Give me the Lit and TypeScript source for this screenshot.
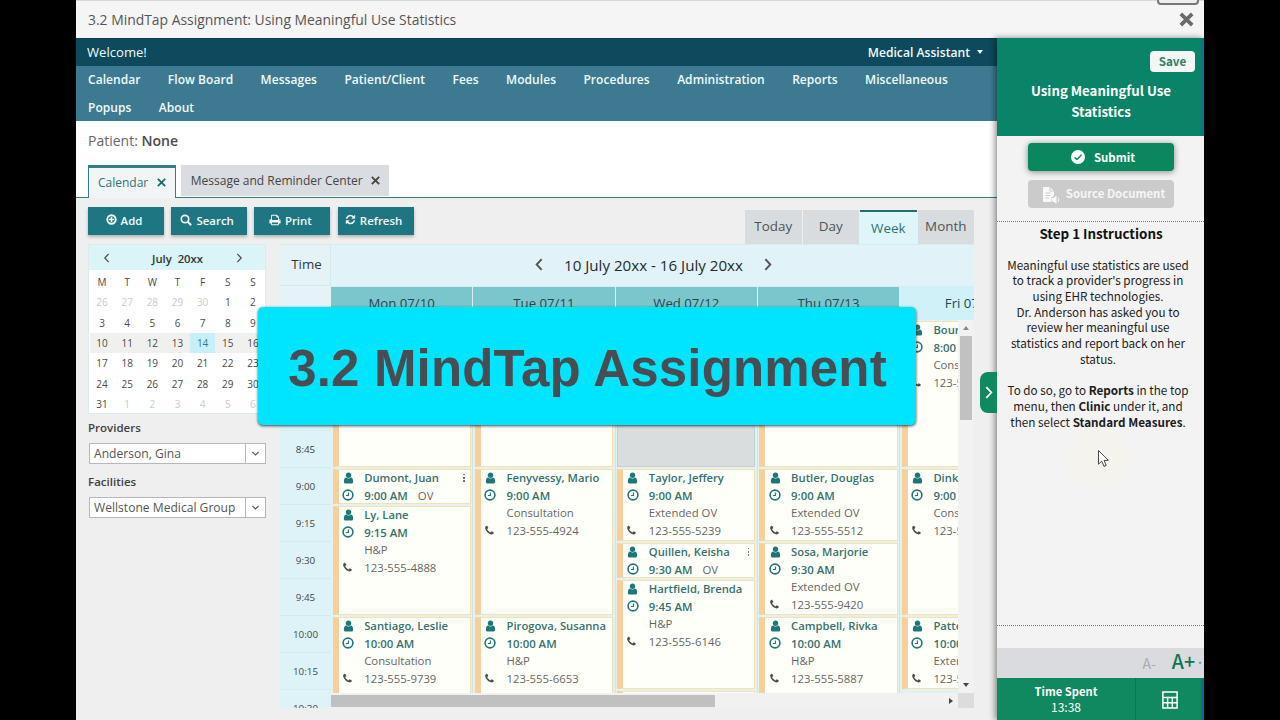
import { LitElement, html, css, svg, nothing } from "lit";
import { customElement, property } from "lit/decorators.js";
import { classMap } from "lit/directives/class-map.js";

const PATHS = {
  user: "M1536 1399q0 109-62.5 187t-150.5 78h-854q-88 0-150.5-78t-62.5-187q0-85 8.5-160.5t31.5-152 58.5-131 94-89 134.5-34.5q131 128 313 128t313-128q76 0 134.5 34.5t94 89 58.5 131 31.5 152 8.5 160.5zm-256-887q0 159-112.5 271.5t-271.5 112.5-271.5-112.5-112.5-271.5 112.5-271.5 271.5-112.5 271.5 112.5 112.5 271.5z",
  phone: "M1600 1240q0 27-10 70.5t-21 68.5q-21 50-122 106-94 51-186 51-27 0-52.5-3.5t-57.5-12.5-47.5-14.5-55.5-20.5-49-18q-98-35-175-83-128-79-264.5-215.5t-215.5-264.5q-48-77-83-175-3-9-18-49t-20.5-55.5-14.5-47.5-12.5-57.5-3.5-52.5q0-92 51-186 56-101 106-122 25-11 68.5-21t70.5-10q14 0 21 3 18 6 53 76 11 19 30 54t35 63.5 31 53.5q3 4 17.5 25t21.5 35.5 7 28.5q0 20-28.5 50t-62 55-62 53-28.5 46q0 9 5 22.5t8.5 20.5 14 24 11.5 19q76 137 174 235t235 174q2 1 19 11.5t24 14 20.5 8.5 22.5 5q18 0 46-28.5t53-62 55-62 50-28.5q14 0 28.5 7t35.5 21.5 25 17.5q25 15 53.5 31t63.5 35 54 30q70 35 76 53 3 7 3 21z",
  refresh: "M1639 1056q0 5-1 7-64 268-268 434.5t-478 166.5q-146 0-282.5-55t-243.5-157l-129 129q-19 19-45 19t-45-19-19-45v-448q0-26 19-45t45-19h448q26 0 45 19t19 45-19 45l-137 137q71 66 161 102t187 36q134 0 250-65t186-179q11-17 53-117 8-23 30-23h192q13 0 22.5 9.5t9.5 22.5zm25-800v448q0 26-19 45t-45 19h-448q-26 0-45-19t-19-45 19-45l138-138q-148-137-349-137-134 0-250 65t-186 179q-11 17-53 117-8 23-30 23h-199q-13 0-22.5-9.5t-9.5-22.5v-7q65-268 270-434.5t480-166.5q146 0 284 55.5t245 156.5l130-129q19-19 45-19t45 19 19 45z",
  print: "M448 1536h896v-256h-896v256zm0-640h896v-384h-160q-40 0-68-28t-28-68v-160h-640v640zm1152 64q0-26-19-45t-45-19-45 19-19 45 19 45 45 19 45-19 19-45zm128 0v416q0 13-9.5 22.5t-22.5 9.5h-224v160q0 40-28 68t-68 28h-960q-40 0-68-28t-28-68v-160h-224q-13 0-22.5-9.5t-9.5-22.5v-416q0-79 56.5-135.5t135.5-56.5h64v-544q0-40 28-68t68-28h672q40 0 88 20t76 48l152 152q28 28 48 76t20 88v256h64q79 0 135.5 56.5t56.5 135.5z",
};
const fa = (name: keyof typeof PATHS, size: number) =>
  html`<svg width=${size} height=${size} viewBox="0 0 1792 1792" fill="currentColor"><path d=${PATHS[name]} /></svg>`;

const stroked = (size: number, width: number, body: unknown) =>
  html`<svg width=${size} height=${size} viewBox="0 0 12 12" fill="none" stroke="currentColor" stroke-width=${width}>${body}</svg>`;

const clock = () => stroked(12, 1.6, svg`<circle cx="6" cy="6" r="4.9" /><path d="M6.4 3.4V6.5H3.9" stroke-width="1.1" />`);
const plus = () => stroked(11, 2.1, svg`<circle cx="6" cy="6" r="4.6" /><path d="M6 3.2V8.8M3.2 6H8.8" stroke-width="1.7" />`);
const search = () => stroked(12, 1.7, svg`<circle cx="5" cy="5" r="3.7" /><path d="M7.7 7.7L11.2 11.2" stroke-width="2" />`);
const cross = (size: number, width: number) => stroked(size, width, svg`<path d="M2 2L10 10M10 2L2 10" />`);
const left = (size: number, width: number) => stroked(size, width, svg`<path d="M8 1L3.4 6L8 11" />`);
const right = (size: number, width: number) => stroked(size, width, svg`<path d="M4 1L8.6 6L4 11" />`);
const down = () => stroked(9, 1.6, svg`<path d="M1.8 3.8L6 8L10.2 3.8" />`);

interface Visit {
  slots: number;
  name?: string;
  time?: string;
  kind?: string;
  phone?: string;
  closed?: boolean;
}
interface Day {
  label: string;
  current?: boolean;
  visits: Visit[];
}

const OPEN: Visit = { slots: 4 };
const DAYS: Day[] = [
  { label: "Mon 07/10", visits: [OPEN,
    { slots: 1, name: "Dumont, Juan", time: "9:00 AM", kind: "OV" },
    { slots: 3, name: "Ly, Lane", time: "9:15 AM", kind: "H&P", phone: "123-555-4888" },
    { slots: 3, name: "Santiago, Leslie", time: "10:00 AM", kind: "Consultation", phone: "123-555-9739" }] },
  { label: "Tue 07/11", visits: [OPEN,
    { slots: 4, name: "Fenyvessy, Mario", time: "9:00 AM", kind: "Consultation", phone: "123-555-4924" },
    { slots: 3, name: "Pirogova, Susanna", time: "10:00 AM", kind: "H&P", phone: "123-555-6653" }] },
  { label: "Wed 07/12", visits: [{ slots: 4, closed: true },
    { slots: 2, name: "Taylor, Jeffery", time: "9:00 AM", kind: "Extended OV", phone: "123-555-5239" },
    { slots: 1, name: "Quillen, Keisha", time: "9:30 AM", kind: "OV" },
    { slots: 3, name: "Hartfield, Brenda", time: "9:45 AM", kind: "H&P", phone: "123-555-6146" },
    { slots: 2 }] },
  { label: "Thu 07/13", visits: [OPEN,
    { slots: 2, name: "Butler, Douglas", time: "9:00 AM", kind: "Extended OV", phone: "123-555-5512" },
    { slots: 2, name: "Sosa, Marjorie", time: "9:30 AM", kind: "Extended OV", phone: "123-555-9420" },
    { slots: 3, name: "Campbell, Rivka", time: "10:00 AM", kind: "H&P", phone: "123-555-5887" }] },
  { label: "Fri 07/14", current: true, visits: [
    { slots: 4, name: "Bourne", time: "8:00 AM", kind: "Consultation", phone: "123-555" },
    { slots: 4, name: "Dinkins", time: "9:00 AM", kind: "Consultation", phone: "123-555" },
    { slots: 2, name: "Patterson", time: "10:00 AM", kind: "Extended OV", phone: "123-555" }] },
];
// The first slots sit behind the banner and carry no label.
const TIMES = ["", "", "", "8:45", "9:00", "9:15", "9:30", "9:45", "10:00", "10:15", "10:30"];

@customElement("visit-card")
class VisitCard extends LitElement {
  @property({ attribute: false }) visit!: Visit;
  static styles = css`
    :host { display: block; flex: none; box-sizing: border-box; padding: 1px 1.5px 1.5px 1.5px;
      border-right: 1px solid #cfe6df; font: 400 11.35px/17.5px "Open Sans", sans-serif; color: #666; }
    .card { box-sizing: border-box; height: 100%; background: #fffffa; border: 1px solid #f8dfb4; border-left: 6px solid #f6cf9c;
      padding-left: 3.2px; overflow: hidden; }
    .closed { background: #dadddd; border: 1px solid #c5d0d6; }
    .lines { margin-top: -1px; }
    .line { display: grid; grid-template-columns: 22.5px auto 1fr; align-items: center; height: 17.5px; white-space: nowrap; }
    .icon { display: flex; width: 13px; justify-content: center; color: #1f7679; }
    .icon.tel { color: #4c4c4c; width: 11px; }
    .name, .time { font-weight: 600; color: #35716f; font-size: 11.25px; }
    .time { font-weight: 600; font-size: 11.4px; }
    .extra { padding-left: 10px; }
    .dots { justify-self: end; display: grid; gap: 1.7px; padding-right: 5px; }
    .dots i { width: 1.7px; height: 1.7px; background: #777; }
  `;
  render() {
    const v = this.visit;
    if (!v.name) return html`<div class=${classMap({ card: true, closed: !!v.closed })}></div>`;
    const short = !v.phone;
    return html`<div class="card"><div class="lines">
      <div class="line"><span class="icon">${fa("user", 14)}</span><span class="name">${v.name}</span>
        ${short ? html`<span class="dots"><i></i><i></i><i></i></span>` : nothing}</div>
      <div class="line"><span class="icon">${clock()}</span><span class="time">${v.time}</span>
        ${short ? html`<span class="extra">${v.kind}</span>` : nothing}</div>
      ${short ? nothing : html`
        <div class="line"><span></span><span>${v.kind}</span></div>
        <div class="line"><span class="icon tel">${fa("phone", 13)}</span><span>${v.phone}</span></div>`}
    </div></div>`;
  }
}

@customElement("week-schedule")
class WeekSchedule extends LitElement {
  static styles = css`
    :host { display: grid; grid-template-columns: 51px 643px; grid-template-rows: 42px 34px 388px;
      font-family: "Open Sans", sans-serif; color: #2d3a40; }
    .time-head { display: flex; align-items: center; justify-content: center; font-size: 13.3px; background: #e6f3f6;
      border: 1px solid #d5eaec; border-width: 1px 1px 1px 0; box-sizing: border-box; padding-left: 3px; padding-bottom: 2px; }
    .range { display: flex; align-items: center; padding-left: 202px; gap: 18px; font-size: 15.15px; color: #1f2a30;
      background: #e1f3f8; border-top: 1px solid #d6ecf0; box-sizing: border-box; white-space: nowrap; padding-bottom: 1px; }
    .range svg { color: #555; margin-top: -1px; }
    .blank { background: #e6f3f6; }
    .heads { display: flex; overflow: hidden; padding-top: 1px; background: #d5eef4; }
    .heads div { flex: 0 0 142.3px; box-sizing: border-box; border-right: 1px solid #d7f0f3; background: #7bc5cd;
      font-size: 13.2px; line-height: 32px; text-align: center; color: #1c4a54; }
    .heads .current { background: #cff1f7; color: #1e4852; padding-left: 2px; }
    .times { height: 388px; overflow: hidden; background: #def3f8; }
    .times div { height: 37px; box-sizing: border-box; border-bottom: 1px solid #d2ebee; text-align: center;
      font-size: 9.8px; line-height: 38.5px; color: #3f4548; }
    .port { display: grid; grid-template-columns: 627px 16px; grid-template-rows: 373px 15px; }
    .days { display: flex; overflow: hidden; background: #e2f2ee; }
    .day { flex: 0 0 142.3px; display: flex; flex-direction: column; }
    .vbar { display: flex; flex-direction: column; align-items: center; justify-content: space-between; background: #f2f2f2;
      padding: 6px 0 6px; box-sizing: border-box; }
    .vthumb { width: 12px; height: 84px; background: #c1c1c1; margin-top: 6px; }
    .vbar .group { display: flex; flex-direction: column; align-items: center; }
    .up, .dn { border: 3.5px solid transparent; width: 0; }
    .up { border-top: 0; border-bottom: 4px solid #888; }
    .dn { border-bottom: 0; border-top: 4px solid #444; }
    .hbar { display: flex; align-items: center; justify-content: space-between; background: #f1f1f1; padding-right: 5px; }
    .hthumb { width: 384px; height: 12px; background: #c0c0c0; }
    .rt { border: 3.5px solid transparent; border-right: 0; border-left: 4px solid #444; }
    .corner { background: #dcdcdc; }
  `;
  render() {
    return html`
      <div class="time-head">Time</div>
      <div class="range">${left(13, 1.8)}<span>10 July 20xx - 16 July 20xx</span>${right(13, 1.8)}</div>
      <div class="blank"></div>
      <div class="heads">${DAYS.map((d) => html`<div class=${classMap({ current: !!d.current })}>${d.label}</div>`)}</div>
      <div class="times">${TIMES.map((t) => html`<div>${t}</div>`)}</div>
      <div class="port">
        <div class="days">${DAYS.map((d) => html`<div class="day">${d.visits.map(
          (v) => html`<visit-card .visit=${v} style="height:${v.slots * 37}px"></visit-card>`)}</div>`)}</div>
        <div class="vbar"><div class="group"><span class="up"></span><span class="vthumb"></span></div><span class="dn"></span></div>
        <div class="hbar"><span class="hthumb"></span><span class="rt"></span></div>
        <div class="corner"></div>
      </div>`;
  }
}

@customElement("month-picker")
class MonthPicker extends LitElement {
  static styles = css`
    :host { display: block; box-sizing: border-box; height: 170px; background: #fff; border: 1px solid #dcebed;
      font: 400 10px/20.35px "Open Sans", sans-serif; color: #4a4a4a; }
    header { display: flex; align-items: center; justify-content: space-between; height: 25px; padding: 3px 21px 0 13px; box-sizing: border-box;
      background: #daf4f7; font-size: 11.3px; font-weight: 600; color: #2e3437; white-space: pre; }
    header svg { color: #555; margin-top: -3px; }
    header span { padding-left: 9px; }
    .grid { display: grid; grid-template-columns: repeat(7, 25.15px); text-align: center; padding: 2px 0 0 .5px; }
    .grid span { height: 20.35px; }
    .muted { color: #c9cccd; }
    .week { background: #f0f0ef; }
    .grid .day { background: #c9effa; color: #2b7f8d; }
  `;
  render() {
    const cells = Array.from({ length: 42 }, (_, i) => {
      const n = i - 4;
      const label = n < 1 ? 30 + n : n > 31 ? n - 31 : n;
      return html`<span class=${classMap({ muted: n < 1 || n > 31, week: n >= 10 && n <= 16, day: n === 14 })}>${label}</span>`;
    });
    return html`<header>${left(10, 1.6)}<span>July  20xx</span>${right(10, 1.6)}</header>
      <div class="grid">${["M", "T", "W", "T", "F", "S", "S"].map((d) => html`<span>${d}</span>`)}${cells}</div>`;
  }
}

@customElement("task-panel")
class TaskPanel extends LitElement {
  static styles = css`
    :host { display: flex; flex-direction: column; box-sizing: border-box; background: #f3f3f3; color: #1c1c1c;
      font-family: "Noto Sans CJK SC", sans-serif; text-align: center; box-shadow: -2px 0 6px rgba(0, 0, 0, .45); }
    .head { display: flex; flex-direction: column; height: 98px; box-sizing: border-box; background: #0a8469; color: #fff;
      border-right: 3px solid #13708a; padding: 13px 6px 0 5px; }
    .save { align-self: flex-end; width: 45px; height: 21px; border-radius: 4px; background: #f4f6f5; color: #2b8262;
      font-size: 11.6px; font-weight: 700; line-height: 20.5px; }
    h1 { margin: 9px 0 0; padding-left: 5px; font-size: 13.25px; line-height: 20.5px; font-weight: 700; }
    .actions { display: flex; flex-direction: column; align-items: center; gap: 9px; height: 85px; box-sizing: border-box; padding: 7px 0 0 1px; }
    .btn { display: flex; align-items: center; justify-content: center; gap: 9px; box-sizing: border-box; width: 146px; height: 28px; border-radius: 4px;
      background: #0b875f; color: #fff; font-size: 11.45px; font-weight: 700; box-shadow: 0 1px 6px rgba(0, 0, 0, .45); padding-left: 4px; }
    .btn.off { background: #cbcbcb; box-shadow: none; color: #f6f6f6; font-size: 11.4px; padding: 0 0 2px 5px; gap: 6px; }
    .btn svg { display: block; }
    .btn.off svg { margin-top: 3px; }
    .steps { height: 405px; box-sizing: border-box; border: dotted #777; border-width: 1px 0; padding: 0 12px 0 7px; }
    h2 { margin: 0 0 0 6px; font-size: 13.4px; line-height: 22px; font-weight: 700; color: #111; }
    p { margin: 0; font-size: 11.7px; line-height: 15.7px; white-space: nowrap; }
    .first { padding-top: 12.5px; }
    .second { padding-top: 15.7px; }
    .fonts { margin-top: 22px; display: flex; justify-content: flex-end; align-items: center; gap: 16px; height: 30px; background: #dadbdf;
      font-weight: 500; color: #0f7353; line-height: 28px; box-sizing: border-box; padding-bottom: 3px; }
    .small { font-size: 14px; color: #a9abaf; font-weight: 400; padding-top: 3px; }
    .large { font-size: 19.5px; white-space: nowrap; margin-right: -1px; }
    .large small { font-size: 10px; vertical-align: 2px; color: #5fa08a; }
    .foot { flex: 1; display: flex; background: #108860; border-right: 3px solid #14698c; color: #fff; }
    .spent { width: 139px; border-right: 1px solid #0c7452; font-size: 12px; line-height: 15.5px; padding-top: 5px; box-sizing: border-box; }
    .spent b { display: block; font-size: 11.2px; line-height: 16px; font-weight: 700; }
    .calc { flex: 1; display: flex; align-items: center; justify-content: center; padding: 2px 0 0 3px; }
  `;
  render() {
    return html`
      <div class="head"><span class="save">Save</span><h1>Using Meaningful Use<br />Statistics</h1></div>
      <div class="actions">
        <span class="btn"><svg width="14" height="14" viewBox="0 0 14 14"><circle cx="7" cy="7" r="7" fill="#fff" />
          <path d="M3.6 7.2L6 9.6L10.6 4.8" fill="none" stroke="#0b875f" stroke-width="1.4" /></svg>Submit</span>
        <span class="btn off"><svg width="18" height="18" viewBox="0 0 18 18" fill="#f8f8f8">
          <path d="M1 1H8L12 5V9.5L9 12V16H1Z" /><path d="M9.5 12H11.5L14.5 9.5V18L11.5 15.5H9.5Z" />
          <path d="M3.5 7H8.5M3.5 9.5H8.5M3.5 12H7M8 1V5H12" fill="none" stroke="#cbcbcb" stroke-width="1" />
          <path d="M16 11.5Q17.6 13.7 16 16" fill="none" stroke="#f8f8f8" /></svg>Source Document</span>
      </div>
      <div class="steps">
        <h2>Step 1 Instructions</h2>
        <p class="first">Meaningful use statistics are used<br />to track a provider's progress in<br />using EHR technologies.<br />Dr. Anderson has asked you to<br />review her meaningful use<br />statistics and report back on her<br />status.</p>
        <p class="second">To do so, go to <b>Reports</b> in the top<br />menu, then <b>Clinic</b> under it, and<br />then select <b>Standard Measures</b>.</p>
      </div>
      <div class="fonts"><span class="small">A-</span><span class="large">A+<small>·</small></span></div>
      <div class="foot"><div class="spent"><b>Time Spent</b>13:38</div>
        <div class="calc"><svg width="16" height="18" viewBox="0 0 16 18" fill="none" stroke="#fff" stroke-width="1.5">
          <path d="M.9 .9H15.1V17.1H.9ZM.9 6.5H15.1M1 11.8H15M5.6 7V17M10.3 7V17" /></svg></div></div>`;
  }
}

@customElement("app-root")
class AppRoot extends LitElement {
  static styles = css`
    :host { display: block; position: relative; width: 1280px; height: 720px; overflow: hidden; background: #000;
      font-family: "Open Sans", sans-serif; color: #555; }
    .window { display: flex; flex-direction: column; width: 1128px; height: 720px; margin: 0 auto; overflow: hidden; background: #efeff0; }
    .title { position: relative; display: flex; align-items: center; justify-content: space-between; height: 38px; box-sizing: border-box; flex: none;
      border-top: 1px solid #d8d8d8; background: #f5f5f5; padding: 0 9px 1px 12px; font-size: 13.9px; color: #555; }
    .title svg { color: #6a6a6a; }
    .stub { position: absolute; right: 5px; top: -7px; width: 38px; height: 7px; border: 2px solid #777; border-radius: 4px; background: #eee; }
    .body { display: flex; flex: 1; min-height: 0; }
    .main { width: 921px; display: flex; flex-direction: column; }
    .user { display: flex; justify-content: space-between; align-items: center; height: 28px; background: #0e495d; color: #f2fbfd;
      padding: 0 14px 2px 11px; font-size: 13.1px; box-sizing: border-box; border-top: 1px solid #0a3a4b; }
    .who { display: flex; align-items: center; gap: 7px; font-size: 12.15px; font-weight: 600; padding-top: 1px; }
    .caret { border: 3px solid transparent; border-top: 4px solid #f2fbfd; border-bottom: 0; }
    nav { display: flex; flex-wrap: wrap; gap: 0 27.4px; height: 55px; background: #3d7a92; color: #f0fafc; padding: 0 12px;
      box-sizing: border-box; font-size: 12px; letter-spacing: .05px; font-weight: 600; line-height: 28px; align-content: flex-start; }
    .patient { height: 77px; box-sizing: border-box; display: flex; flex-direction: column; justify-content: space-between; background: #fff; padding-top: 8.5px;
      border-bottom: 1px solid #2f8083; }
    .patient p { margin: 0 0 0 12px; font-size: 14px; line-height: 21px; color: #666; }
    .patient b { font-weight: 600; color: #4c4c4c; font-size: 14.1px; }
    .tabs { display: flex; gap: 4.5px; padding-left: 12px; margin-bottom: -1px; align-items: flex-start; }
    .tab { display: flex; align-items: center; gap: 7.5px; height: 31px; box-sizing: border-box; background: #d9dce1; color: #444; font-size: 12px; padding: 0 8px 0 10px; }
    .tab.on { height: 33px; background: #f2f5f6; color: #2d7375; border: 1px solid #2f8083; border-top-width: 3px; border-bottom: 0; padding: 0 8.5px 1px 9px; }
    .tab.on svg { color: #1d6c6e; }
    .work { display: grid; grid-template-columns: 178px 694px; column-gap: 14px; padding: 9px 0 0 12px; }
    .bar { grid-column: 1 / 3; display: flex; justify-content: space-between; height: 37px; }
    .buttons { display: flex; gap: 7.2px; }
    .button { display: flex; align-items: center; justify-content: center; gap: 4px; width: 76px; height: 28px; box-sizing: border-box; background: #1d7681; color: #f3fbfb;
      font-size: 11.45px; font-weight: 600; box-shadow: 0 2px 3px rgba(0, 0, 0, .25); padding: 0 4px 1px 0; }
    .button svg { margin-top: -2px; }
    .views { display: flex; gap: 1px; padding-top: 3px; color: #4d5459; font-size: 13.4px; }
    .view { width: 56.5px; height: 34px; line-height: 33px; text-align: center; background: #d8dcde; }
    .view.on { background: #def6f9; color: #2d7375; border-top: 2px solid #2b686b; line-height: 33px; height: 32px; }
    label { display: block; font-size: 11.5px; font-weight: 600; color: #3f3f3f; line-height: 16px; margin: 6px 0 7px; }
    .select { display: grid; grid-template-columns: 1fr 20px; height: 21px; box-sizing: border-box; border: 1px solid #b5b8ba; background: #fff; font-size: 12.1px;
      line-height: 19px; padding-left: 4px; margin: 0 0 0 1px; color: #555; }
    .select span { display: flex; align-items: center; justify-content: center; border-left: 1px solid #b5b8ba; }
    .select + label { margin-top: 10px; }
    task-panel { width: 207px; z-index: 1; position: relative; }
    .handle { position: absolute; left: 980px; top: 372px; width: 17px; height: 41px; border-radius: 8px 0 0 8px; background: #108860; color: #fff;
      display: flex; align-items: center; justify-content: center; z-index: 2; }
    .banner { position: absolute; left: 258px; top: 307px; width: 658px; height: 118px; border-radius: 5px; background: #00e5ff; z-index: 3;
      box-shadow: 0 1px 3px rgba(0, 0, 0, .75); color: #494d51; font: 700 51px/123px "Liberation Sans", sans-serif; letter-spacing: .16px;
      text-align: center; white-space: nowrap; text-indent: 1px; }
    .pointer { position: absolute; left: 1097px; top: 449px; z-index: 3; }
    .halo { position: absolute; left: 1067px; top: 426px; width: 62px; height: 62px; border-radius: 50%; z-index: 2;
      background: rgba(255, 250, 200, .12); }
  `;
  render() {
    const nav = ["Calendar", "Flow Board", "Messages", "Patient/Client", "Fees", "Modules", "Procedures", "Administration", "Reports", "Miscellaneous", "Popups", "About"];
    return html`
      <div class="window">
        <div class="title"><span>3.2 MindTap Assignment: Using Meaningful Use Statistics</span>${cross(17, 2.6)}<i class="stub"></i></div>
        <div class="body">
          <div class="main">
            <div class="user"><span>Welcome!</span><span class="who">Medical Assistant<i class="caret"></i></span></div>
            <nav>${nav.map((n) => html`<span>${n}</span>`)}</nav>
            <div class="patient">
              <p>Patient: <b>None</b></p>
              <div class="tabs"><span class="tab on">Calendar ${cross(11, 2)}</span><span class="tab">Message and Reminder Center ${cross(11, 2)}</span></div>
            </div>
            <div class="work">
              <div class="bar">
                <div class="buttons"><span class="button">${plus()}Add</span><span class="button">${search()}Search</span>
                  <span class="button">${fa("print", 12)}Print</span><span class="button">${fa("refresh", 11)}Refresh</span></div>
                <div class="views"><span class="view">Today</span><span class="view">Day</span><span class="view on">Week</span><span class="view">Month</span></div>
              </div>
              <div>
                <month-picker></month-picker>
                <label>Providers</label><div class="select">Anderson, Gina<span>${down()}</span></div>
                <label>Facilities</label><div class="select">Wellstone Medical Group<span>${down()}</span></div>
              </div>
              <week-schedule></week-schedule>
            </div>
          </div>
          <task-panel></task-panel>
        </div>
      </div>
      <div class="handle">${right(13, 1.7)}</div>
      <div class="banner">3.2 MindTap Assignment</div>
      <div class="halo"></div>
      <svg class="pointer" width="13" height="20" viewBox="0 0 13 20"><path d="M1.5 1.5V15.2L4.7 12.2L7 17.4L9.2 16.4L7 11.4H11.3Z" fill="#fff" stroke="#444" /></svg>`;
  }
}
